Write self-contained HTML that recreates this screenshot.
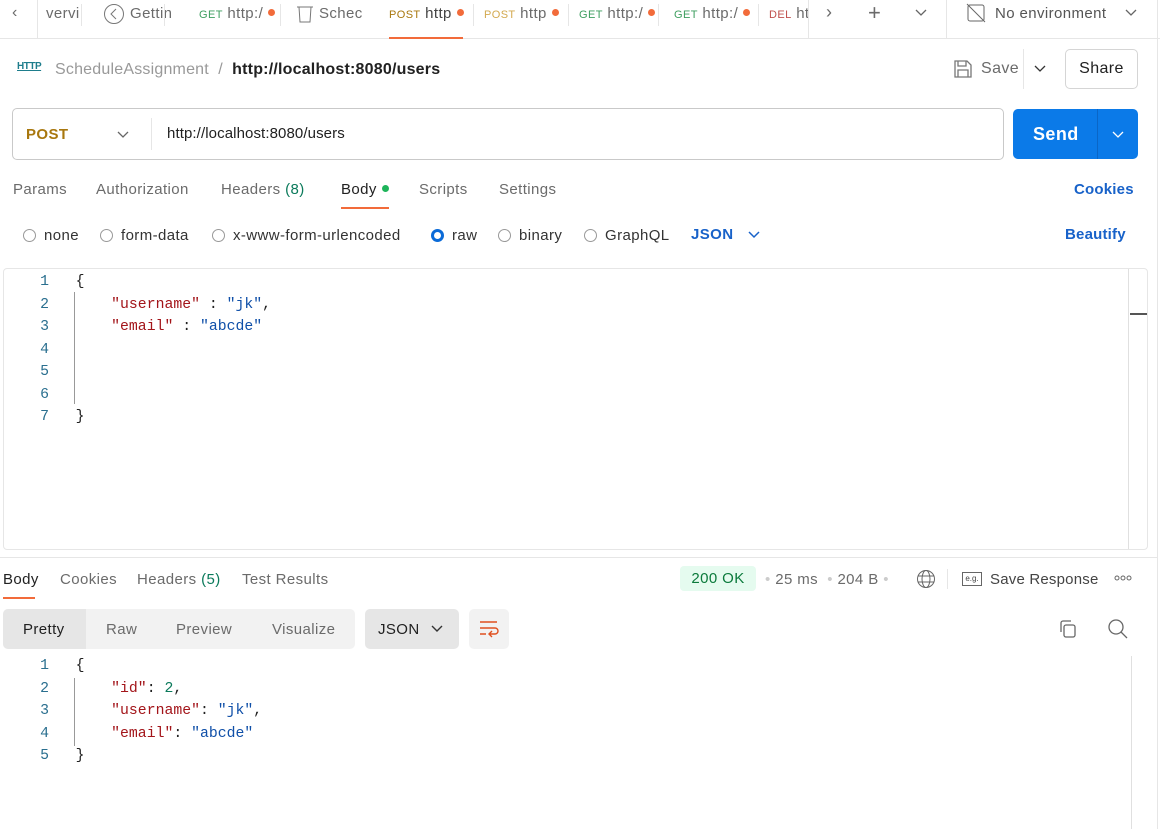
<!DOCTYPE html><html><head><style>
*{margin:0;padding:0;box-sizing:border-box}
body{width:1174px;height:829px;overflow:hidden;background:#fff;font-family:"Liberation Sans",sans-serif;color:#212121;position:relative;font-size:14px;letter-spacing:.4px}
.a{position:absolute;white-space:nowrap}
.g{color:#6b6b6b}
.mono{font-family:"Liberation Mono",monospace;font-size:14.8px;letter-spacing:0}
.ln{color:#2a6f8f;width:20px;text-align:right}
.k{color:#a3151a}.s{color:#0f4fa8}.n{color:#0b7a5b}
.dot{display:inline-block;width:7px;height:7px;border-radius:50%;background:#f26b3a;margin-left:5px;vertical-align:2px}
.sep{position:absolute;width:1px;background:#e6e6e6}
.radio{display:inline-block;width:13px;height:13px;border:1px solid #999;border-radius:50%;vertical-align:-2px;margin-right:8px}
</style></head><body>
<div style="position:absolute;left:0;top:38px;width:1160px;height:1px;background:#e6e6e6"></div>
<div class="sep" style="left:37px;top:0;height:38px"></div>
<div class="a g" style="left:12px;top:4px;font-size:16px">‹</div>
<div class="a g" style="left:46px;top:5px;font-size:15px">vervi</div>
<div class="sep" style="left:81px;top:4px;height:22px"></div>
<svg class="a" style="left:103px;top:3px" width="22" height="22"><circle cx="11" cy="11" r="9.5" fill="none" stroke="#777"/><path d="M13 6l-5 5 5 5" fill="none" stroke="#777"/></svg>
<div class="a g" style="left:130px;top:5px;font-size:15px">Gettin</div>
<div class="sep" style="left:164px;top:4px;height:22px"></div>
<div class="a" style="left:199px;top:5px;font-size:15px"><span style="color:#3e9e5f;font-size:11px">GET</span> <span class="g">http:/</span><span class="dot"></span></div>
<div class="sep" style="left:280px;top:4px;height:22px"></div>
<svg class="a" style="left:295px;top:4px" width="20" height="20"><path d="M2 3h16M4 3l1 15h10l1-15" fill="none" stroke="#777"/></svg>
<div class="a g" style="left:319px;top:5px;font-size:15px">Schec</div>
<div class="a" style="left:389px;top:5px;font-size:15px"><span style="color:#a8770e;font-size:11px">POST</span> <span style="color:#444">http</span><span class="dot"></span></div>
<div style="position:absolute;left:389px;top:37px;width:74px;height:2px;background:#f26b3a"></div>
<div class="sep" style="left:473px;top:4px;height:22px"></div>
<div class="a" style="left:484px;top:5px;font-size:15px"><span style="color:#d3a94f;font-size:11px">POST</span> <span class="g">http</span><span class="dot"></span></div>
<div class="sep" style="left:568px;top:4px;height:22px"></div>
<div class="a" style="left:579px;top:5px;font-size:15px"><span style="color:#3e9e5f;font-size:11px">GET</span> <span class="g">http:/</span><span class="dot"></span></div>
<div class="sep" style="left:658px;top:4px;height:22px"></div>
<div class="a" style="left:674px;top:5px;font-size:15px"><span style="color:#3e9e5f;font-size:11px">GET</span> <span class="g">http:/</span><span class="dot"></span></div>
<div class="sep" style="left:758px;top:4px;height:22px"></div>
<div class="a" style="left:769px;top:5px;font-size:15px"><span style="color:#c0504d;font-size:11px">DEL</span> <span class="g">ht</span></div>
<div class="sep" style="left:808px;top:0;height:38px"></div>
<div class="a g" style="left:826px;top:2px;font-size:18px">›</div>
<div class="a g" style="left:868px;top:0;font-size:22px;font-weight:300">+</div>
<svg class="a" style="left:914px;top:8px" width="14" height="10"><path d="M2 2l5 5 5-5" fill="none" stroke="#666" stroke-width="1.3"/></svg>
<div class="sep" style="left:946px;top:0;height:38px"></div>
<svg class="a" style="left:966px;top:3px" width="20" height="20"><rect x="2" y="2" width="16" height="16" rx="2" fill="none" stroke="#666"/><path d="M1 1l18 18" stroke="#666"/></svg>
<div class="a g" style="left:995px;top:5px;font-size:15px;color:#555">No environment</div>
<svg class="a" style="left:1124px;top:8px" width="14" height="10"><path d="M2 2l5 5 5-5" fill="none" stroke="#666" stroke-width="1.3"/></svg>
<div class="sep" style="left:1157px;top:0;height:829px"></div>
<div class="a" style="left:17px;top:61px;font-size:10px;color:#1e7d8c;text-decoration:underline;font-weight:bold;letter-spacing:-.5px">HTTP</div>
<div class="a" style="left:55px;top:61px;font-size:16px;letter-spacing:.2px"><span style="color:#999">ScheduleAssignment</span> <span style="color:#999">&nbsp;/&nbsp;</span> <b style="color:#212121">http://localhost:8080/users</b></div>
<svg class="a" style="left:953px;top:59px" width="20" height="20"><path d="M2 2h12l4 4v12H2z M5 2v5h8V2 M5 18v-7h10v7" fill="none" stroke="#777" stroke-width="1.3"/></svg>
<div class="a g" style="left:981px;top:60px;font-size:16px">Save</div>
<div class="sep" style="left:1023px;top:49px;height:40px"></div>
<svg class="a" style="left:1033px;top:64px" width="14" height="10"><path d="M2 2l5 5 5-5" fill="none" stroke="#333" stroke-width="1.3"/></svg>
<div class="a" style="left:1065px;top:49px;width:73px;height:40px;border:1px solid #d5d5d5;border-radius:5px;font-size:16px;text-align:center;line-height:38px">Share</div>
<div class="a" style="left:12px;top:108px;width:992px;height:52px;border:1px solid #c9c9c9;border-radius:5px"></div>
<div class="a" style="left:26px;top:126px;font-size:15px;font-weight:bold;color:#a8770e">POST</div>
<svg class="a" style="left:116px;top:130px" width="14" height="10"><path d="M2 2l5 5 5-5" fill="none" stroke="#666" stroke-width="1.3"/></svg>
<div class="sep" style="left:151px;top:118px;height:32px"></div>
<div class="a" style="left:167px;top:125px;font-size:15px;letter-spacing:.1px">http://localhost:8080/users</div>
<div class="a" style="left:1013px;top:109px;width:125px;height:50px;background:#0b7ae8;border-radius:5px"></div>
<div class="a" style="left:1033px;top:124px;font-size:18px;font-weight:bold;color:#fff">Send</div>
<div class="a" style="left:1097px;top:109px;width:1px;height:50px;background:#0a66c7"></div>
<svg class="a" style="left:1111px;top:130px" width="14" height="10"><path d="M2 2l5 5 5-5" fill="none" stroke="#fff" stroke-width="1.3"/></svg>
<div class="a g" style="left:13px;top:181px;font-size:15px">Params</div>
<div class="a g" style="left:96px;top:181px;font-size:15px">Authorization</div>
<div class="a g" style="left:221px;top:181px;font-size:15px">Headers <span style="color:#0b7a5b">(8)</span></div>
<div class="a" style="left:341px;top:181px;font-size:15px">Body<span class="dot" style="background:#1eb45a"></span></div>
<div style="position:absolute;left:341px;top:207px;width:48px;height:2px;background:#f26b3a"></div>
<div class="a g" style="left:419px;top:181px;font-size:15px">Scripts</div>
<div class="a g" style="left:499px;top:181px;font-size:15px">Settings</div>
<div class="a" style="left:1074px;top:181px;font-size:15px;font-weight:bold;color:#1862c9;letter-spacing:.2px">Cookies</div>
<div class="a" style="left:23px;top:227px;font-size:15px;color:#333"><span class="radio"></span>none</div>
<div class="a" style="left:100px;top:227px;font-size:15px;color:#333"><span class="radio"></span>form-data</div>
<div class="a" style="left:212px;top:227px;font-size:15px;color:#333"><span class="radio"></span>x-www-form-urlencoded</div>
<div class="a" style="left:431px;top:227px;font-size:15px;color:#333"><span class="radio" style="border:3px solid #0b6bd8"></span>raw</div>
<div class="a" style="left:498px;top:227px;font-size:15px;color:#333"><span class="radio"></span>binary</div>
<div class="a" style="left:584px;top:227px;font-size:15px;color:#333"><span class="radio"></span>GraphQL</div>
<div class="a" style="left:691px;top:226px;font-size:15px;font-weight:bold;color:#1862c9">JSON</div>
<svg class="a" style="left:747px;top:230px" width="14" height="10"><path d="M2 2l5 5 5-5" fill="none" stroke="#1862c9" stroke-width="1.5"/></svg>
<div class="a" style="left:1065px;top:226px;font-size:15px;font-weight:bold;color:#1862c9;letter-spacing:.2px">Beautify</div>
<div class="a" style="left:3px;top:268px;width:1145px;height:282px;border:1px solid #e6e6e6;border-radius:4px"></div>
<div class="a" style="left:1128px;top:269px;width:1px;height:280px;background:#e0e0e0"></div>
<div class="a" style="left:1130px;top:313px;width:17px;height:2px;background:#555"></div>
<div class="a" style="left:74px;top:292px;width:1px;height:112px;background:#999"></div>
<div class="a mono" style="left:29px;top:271px;line-height:22.5px">
<div><span class="ln" style="display:inline-block">1</span>&nbsp;&nbsp;&nbsp;{</div>
<div><span class="ln" style="display:inline-block">2</span>&nbsp;&nbsp;&nbsp;&nbsp;&nbsp;&nbsp;&nbsp;<span class="k">"username"</span> : <span class="s">"jk"</span>,</div>
<div><span class="ln" style="display:inline-block">3</span>&nbsp;&nbsp;&nbsp;&nbsp;&nbsp;&nbsp;&nbsp;<span class="k">"email"</span> : <span class="s">"abcde"</span></div>
<div><span class="ln" style="display:inline-block">4</span></div>
<div><span class="ln" style="display:inline-block">5</span></div>
<div><span class="ln" style="display:inline-block">6</span></div>
<div><span class="ln" style="display:inline-block">7</span>&nbsp;&nbsp;&nbsp;}</div>
</div>
<div class="a" style="left:0;top:557px;width:1157px;height:1px;background:#e6e6e6"></div>
<div class="a" style="left:3px;top:571px;font-size:15px">Body</div>
<div style="position:absolute;left:3px;top:597px;width:32px;height:2px;background:#f26b3a"></div>
<div class="a g" style="left:60px;top:571px;font-size:15px">Cookies</div>
<div class="a g" style="left:137px;top:571px;font-size:15px">Headers <span style="color:#0b7a5b">(5)</span></div>
<div class="a g" style="left:242px;top:571px;font-size:15px">Test Results</div>
<div class="a" style="left:680px;top:566px;width:76px;height:25px;background:#e5fbef;border-radius:4px;color:#0b7a3b;font-size:15px;text-align:center;line-height:25px">200 OK</div>
<div class="a g" style="left:765px;top:571px;font-size:15px"><span style="color:#ccc">•</span> 25 ms <span style="color:#ccc">&nbsp;•</span> 204 B <span style="color:#ccc">•</span></div>
<svg class="a" style="left:916px;top:569px" width="20" height="20"><circle cx="10" cy="10" r="8.5" fill="none" stroke="#666"/><ellipse cx="10" cy="10" rx="4" ry="8.5" fill="none" stroke="#666"/><path d="M2 7h16M2 13h16" stroke="#666"/></svg>
<div class="sep" style="left:947px;top:569px;height:20px"></div>
<div class="a" style="left:962px;top:572px;width:20px;height:14px;border:1px solid #666;font-size:8px;color:#444;line-height:12px;text-align:center;letter-spacing:0">e.g.</div>
<div class="a g" style="left:990px;top:571px;font-size:15px;color:#444;letter-spacing:.2px">Save Response</div>
<svg class="a" style="left:1114px;top:575px" width="18" height="6"><circle cx="3" cy="3" r="2" fill="none" stroke="#666"/><circle cx="9" cy="3" r="2" fill="none" stroke="#666"/><circle cx="15" cy="3" r="2" fill="none" stroke="#666"/></svg>
<div class="a" style="left:3px;top:609px;width:352px;height:40px;background:#f2f2f2;border-radius:5px"></div>
<div class="a" style="left:3px;top:609px;width:83px;height:40px;background:#e6e6e6;border-radius:5px 0 0 5px"></div>
<div class="a" style="left:23px;top:621px;font-size:15px">Pretty</div>
<div class="a g" style="left:106px;top:621px;font-size:15px">Raw</div>
<div class="a g" style="left:176px;top:621px;font-size:15px">Preview</div>
<div class="a g" style="left:272px;top:621px;font-size:15px">Visualize</div>
<div class="a" style="left:365px;top:609px;width:94px;height:40px;background:#e6e6e6;border-radius:5px"></div>
<div class="a" style="left:378px;top:621px;font-size:15px">JSON</div>
<svg class="a" style="left:430px;top:624px" width="14" height="10"><path d="M2 2l5 5 5-5" fill="none" stroke="#333" stroke-width="1.4"/></svg>
<div class="a" style="left:469px;top:609px;width:40px;height:40px;background:#f2f2f2;border-radius:5px"></div>
<svg class="a" style="left:478px;top:618px" width="22" height="22"><path d="M2 4h17M2 10h15a3 3 0 010 6h-5M14 13l-3 3 3 3M2 16h6" fill="none" stroke="#e0501f" stroke-width="1.4"/></svg>
<svg class="a" style="left:1058px;top:619px" width="20" height="20"><rect x="6" y="6" width="11" height="12" rx="2" fill="none" stroke="#666" stroke-width="1.3"/><path d="M3 13V4a2 2 0 012-2h8" fill="none" stroke="#666" stroke-width="1.3"/></svg>
<svg class="a" style="left:1107px;top:618px" width="22" height="22"><circle cx="9" cy="9" r="7" fill="none" stroke="#666" stroke-width="1.3"/><path d="M14 14l6 6" stroke="#666" stroke-width="1.3"/></svg>
<div class="a" style="left:1131px;top:656px;width:1px;height:173px;background:#e0e0e0"></div>
<div class="a" style="left:74px;top:678px;width:1px;height:68px;background:#999"></div>
<div class="a mono" style="left:29px;top:655px;line-height:22.6px">
<div><span class="ln" style="display:inline-block">1</span>&nbsp;&nbsp;&nbsp;{</div>
<div><span class="ln" style="display:inline-block">2</span>&nbsp;&nbsp;&nbsp;&nbsp;&nbsp;&nbsp;&nbsp;<span class="k">"id"</span>: <span class="n">2</span>,</div>
<div><span class="ln" style="display:inline-block">3</span>&nbsp;&nbsp;&nbsp;&nbsp;&nbsp;&nbsp;&nbsp;<span class="k">"username"</span>: <span class="s">"jk"</span>,</div>
<div><span class="ln" style="display:inline-block">4</span>&nbsp;&nbsp;&nbsp;&nbsp;&nbsp;&nbsp;&nbsp;<span class="k">"email"</span>: <span class="s">"abcde"</span></div>
<div><span class="ln" style="display:inline-block">5</span>&nbsp;&nbsp;&nbsp;}</div>
</div>
</body></html>
